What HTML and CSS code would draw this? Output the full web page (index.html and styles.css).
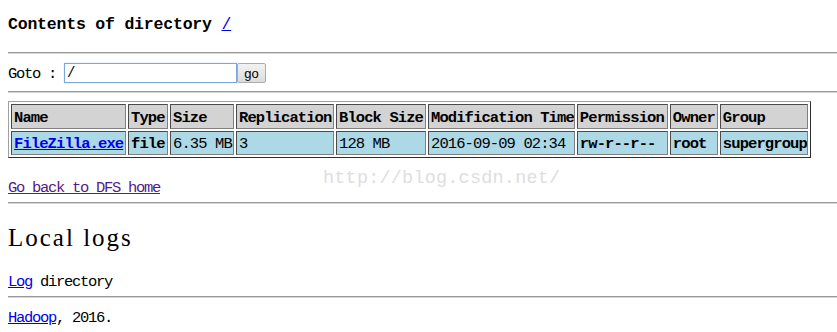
FILE: index.html
```html
<!DOCTYPE html>
<html lang="en">
<head>
  <meta charset="UTF-8">
  <link rel="stylesheet" href="styles.css">
  <title>HDFS:/</title>
</head>
<body>
  <h3 class="title">Contents of directory <a href="#">/</a></h3>
  <hr class="rule rule-top">
  <form class="goto">
    <span class="goto_label">Goto :&nbsp;</span>
    <input type="text" class="goto_input" value="/">
    <button type="button" class="goto_btn">go</button>
  </form>
  <hr class="rule rule-goto">
  <table class="dfsTable">
    <colgroup>
      <col style="width:115px">
      <col style="width:40px">
      <col style="width:64px">
      <col style="width:98px">
      <col style="width:90px">
      <col style="width:146px">
      <col style="width:91px">
      <col style="width:48px">
      <col style="width:88px">
    </colgroup>
    <tr class="rowHead">
      <td>Name</td>
      <td>Type</td>
      <td>Size</td>
      <td>Replication</td>
      <td>Block Size</td>
      <td>Modification Time</td>
      <td>Permission</td>
      <td>Owner</td>
      <td>Group</td>
    </tr>
    <tr class="rowData">
      <td class="strong"><a href="#">FileZilla.exe</a></td>
      <td class="strong">file</td>
      <td>6.35 MB</td>
      <td>3</td>
      <td>128 MB</td>
      <td>2016-09-09 02:34</td>
      <td class="strong">rw-r--r--</td>
      <td class="strong">root</td>
      <td class="strong">supergroup</td>
    </tr>
  </table>
  <span class="watermark">http://blog.csdn.net/</span>
  <p class="back"><a href="#" class="visited">Go back to DFS home</a></p>
  <hr class="rule rule-back">
  <h2 class="logs">Local logs</h2>
  <p class="logdir"><a href="#">Log</a> directory</p>
  <hr class="rule rule-foot">
  <p class="footer"><a href="#">Hadoop</a>, 2016.</p>
</body>
</html>
```

FILE: styles.css
```css
body {
  margin: 0 0 0 8px;
  background: #ffffff;
  color: #000000;
  font-family: "Liberation Mono", monospace;
  font-size: 15.5px;
  letter-spacing: -1.3px;
}

a {
  color: #0000ee;
}
a.visited {
  color: #551a8b;
}

.title {
  margin: 0;
  padding-top: 15px;
  height: 20px;
  line-height: 20px;
  font-size: 16.5px;
  font-weight: bold;
  letter-spacing: -0.2px;
}
.title a {
  font-weight: normal;
}

.rule {
  height: 0;
  margin: 0;
  border: 0;
  border-top: 1px solid #9a9a9a;
  border-bottom: 1px solid #d6d6d6;
}
.rule-top {
  margin-top: 17px;
}
.rule-goto {
  margin-top: 8px;
}
.rule-back {
  margin-top: 4px;
}
.rule-foot {
  margin-top: 4px;
}

.goto {
  display: flex;
  align-items: center;
  height: 20px;
  margin: 9px 0 0 0;
}
.goto_label {
  padding-top: 2px;
  line-height: 20px;
}
.goto_input {
  box-sizing: border-box;
  width: 173px;
  height: 20px;
  margin: 0;
  padding: 0 2px;
  border: 1px solid #7aa7e0;
  box-shadow: 0 0 1px #a9c8ef;
  font-family: "Liberation Mono", monospace;
  font-size: 14px;
  letter-spacing: -1px;
  outline: none;
}
.goto_btn {
  box-sizing: border-box;
  width: 29px;
  height: 20px;
  margin: 0;
  padding: 0;
  border: 1px solid #acacac;
  border-radius: 2px;
  background: linear-gradient(#f2f2f2, #dcdcdc);
  font-family: "Liberation Sans", Arial, sans-serif;
  font-size: 13px;
  letter-spacing: 0;
  color: #000;
}

.dfsTable {
  margin-top: 8px;
  table-layout: fixed;
  border-collapse: separate;
  border-spacing: 2px;
  border: 1px solid;
  border-color: #a0a0a0 #2e2e2e #2e2e2e #a0a0a0;
  letter-spacing: -0.9px;
}
.dfsTable td {
  box-sizing: border-box;
  padding: 0 0 0 2px;
  border: 1px solid;
  border-color: #4a4a4a #808080 #808080 #4a4a4a;
  white-space: nowrap;
  overflow: hidden;
}
.rowHead td {
  height: 25px;
  padding-top: 3px;
  background: #d3d3d3;
  font-weight: bold;
}
.rowData td {
  height: 24px;
  padding-top: 2px;
  background: #add8e6;
}
.rowData td.strong {
  font-weight: bold;
}

.watermark {
  position: absolute;
  left: 323px;
  top: 168px;
  color: #dedede;
  font-family: "Liberation Mono", monospace;
  font-size: 18.5px;
  letter-spacing: 0.2px;
}

.back {
  margin: 20px 0 0 0;
  line-height: 20px;
}

.logs {
  margin: 20px 0 0 0;
  line-height: 28px;
  font-family: "Liberation Serif", serif;
  font-size: 25px;
  font-weight: normal;
  letter-spacing: 2px;
}

.logdir {
  margin: 20px 0 0 0;
  line-height: 20px;
}

.footer {
  margin: 10px 0 0 0;
  line-height: 20px;
}
```
